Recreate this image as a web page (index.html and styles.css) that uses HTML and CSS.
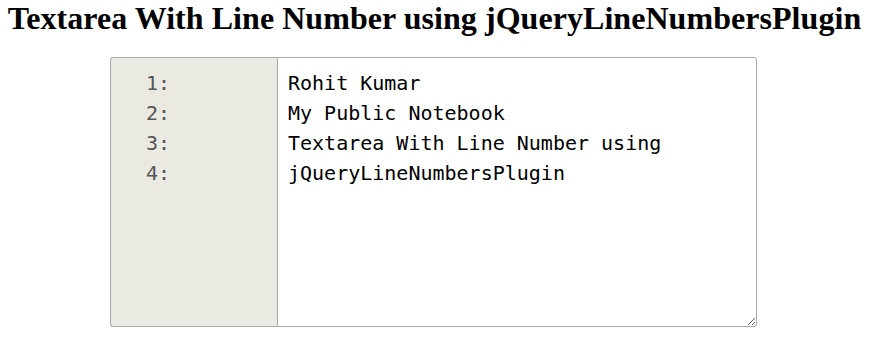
FILE: index.html
```html
<!DOCTYPE html>
<html>
<head>
<meta charset="utf-8">
<title>Textarea With Line Number</title>
<link rel="stylesheet" href="styles.css">
</head>
<body>
<h1 class="title">Textarea With Line Number using jQueryLineNumbersPlugin</h1>
<div class="editor">
  <div class="gutter">
    <div class="num">1:</div>
    <div class="num">2:</div>
    <div class="num">3:</div>
    <div class="num">4:</div>
  </div>
  <textarea class="code" spellcheck="false">Rohit Kumar
My Public Notebook
Textarea With Line Number using
jQueryLineNumbersPlugin</textarea>
</div>
</body>
</html>
```
FILE: styles.css
```css
html, body {
  margin: 0;
  padding: 0;
  background: #fff;
}
body {
  font-family: "Liberation Serif", serif;
}
.title {
  margin: 0 0 20px;
  padding-top: 0;
  text-align: center;
  font-size: 32px;
  font-weight: bold;
  line-height: 37px;
  letter-spacing: 0.05px;
  color: #000;
}
.editor {
  display: flex;
  width: 647px;
  margin: 0 0 0 calc(50% - 324.5px);
}
.gutter {
  box-sizing: border-box;
  width: 167px;
  height: 270px;
  background: #eae9e2;
  border: 1px solid #aaa;
  border-right: none;
  border-radius: 3px 0 0 3px;
  padding: 10px 107px 0 0;
  font-family: "DejaVu Sans Mono", monospace;
  font-size: 20px;
  line-height: 30px;
  color: #555;
  text-align: right;
}
.code {
  box-sizing: border-box;
  width: 480px;
  height: 270px;
  margin: 0;
  border: 1px solid #aaa;
  border-radius: 0 3px 3px 0;
  padding: 10px 10px;
  font-family: "DejaVu Sans Mono", monospace;
  font-size: 20px;
  line-height: 30px;
  color: #000;
  background: #fff;
  outline: none;
  resize: both;
}
```
